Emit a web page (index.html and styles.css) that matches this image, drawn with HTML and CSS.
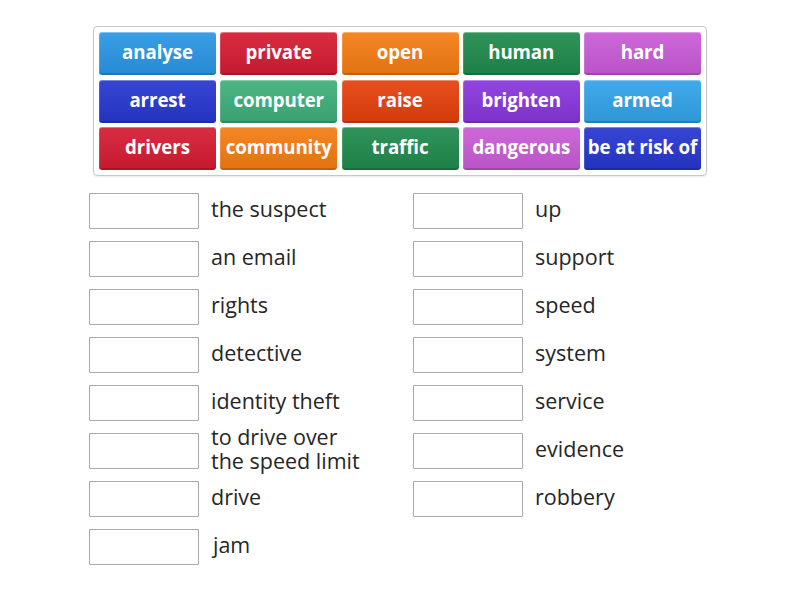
FILE: index.html
```html
<!DOCTYPE html>
<html>
<head>
<meta charset="utf-8">
<link rel="stylesheet" href="styles.css">
</head>
<body>
<div class="page">
  <div class="bank">
    <div class="tile c-sky">analyse</div>
    <div class="tile c-red">private</div>
    <div class="tile c-orange">open</div>
    <div class="tile c-green">human</div>
    <div class="tile c-orchid">hard</div>
    <div class="tile c-blue">arrest</div>
    <div class="tile c-mint">computer</div>
    <div class="tile c-vermil">raise</div>
    <div class="tile c-purple">brighten</div>
    <div class="tile c-sky2">armed</div>
    <div class="tile c-red">drivers</div>
    <div class="tile c-orange">community</div>
    <div class="tile c-green">traffic</div>
    <div class="tile c-orchid">dangerous</div>
    <div class="tile c-blue">be at risk of</div>
  </div>
  <div class="answers">
    <div class="col">
      <div class="item"><div class="slot"></div><div class="label">the suspect</div></div>
      <div class="item"><div class="slot"></div><div class="label">an email</div></div>
      <div class="item"><div class="slot"></div><div class="label">rights</div></div>
      <div class="item"><div class="slot"></div><div class="label">detective</div></div>
      <div class="item"><div class="slot"></div><div class="label">identity theft</div></div>
      <div class="item"><div class="slot"></div><div class="label">to drive over<br>the speed limit</div></div>
      <div class="item"><div class="slot"></div><div class="label">drive</div></div>
      <div class="item"><div class="slot"></div><div class="label nudge">jam</div></div>
    </div>
    <div class="col">
      <div class="item"><div class="slot"></div><div class="label">up</div></div>
      <div class="item"><div class="slot"></div><div class="label">support</div></div>
      <div class="item"><div class="slot"></div><div class="label">speed</div></div>
      <div class="item"><div class="slot"></div><div class="label">system</div></div>
      <div class="item"><div class="slot"></div><div class="label">service</div></div>
      <div class="item"><div class="slot"></div><div class="label">evidence</div></div>
      <div class="item"><div class="slot"></div><div class="label">robbery</div></div>
    </div>
  </div>
</div>
</body>
</html>
```
FILE: styles.css
```css
html, body {
  margin: 0;
  padding: 0;
  background: #ffffff;
}
body {
  font-family: "Open Sans", "Liberation Sans", sans-serif;
  color: #2b2b2b;
}
.page {
  width: 800px;
  padding-top: 26px;
  display: flex;
  flex-direction: column;
  align-items: center;
}
.bank {
  width: 602px;
  padding: 5px;
  border: 1px solid #c9c9c9;
  border-radius: 4px;
  display: grid;
  grid-template-columns: repeat(5, 1fr);
  grid-auto-rows: 43px;
  column-gap: 4.25px;
  row-gap: 4.5px;
  box-shadow: 0 1px 2px rgba(0,0,0,0.08);
}
.tile {
  border-radius: 3px;
  color: #ffffff;
  font-weight: 700;
  font-size: 18.7px;
  padding-bottom: 4px;
  display: flex;
  align-items: center;
  justify-content: center;
  white-space: nowrap;
  letter-spacing: -0.1px;
  box-shadow: inset 0 1px 0 rgba(255,255,255,0.35), inset 1px 0 0 rgba(255,255,255,0.15), inset 0 -2px 0 rgba(0,0,0,0.15);
  background-image: linear-gradient(to bottom, rgba(255,255,255,0.08), rgba(0,0,0,0.08));
}
.c-sky { background-color: #2a96e4; }
.c-sky2 { background-color: #32a2e9; }
.c-red { background-color: #d51b32; }
.c-orange { background-color: #f57c12; }
.c-green { background-color: #1f8a4c; }
.c-orchid { background-color: #c95bd7; }
.c-blue { background-color: #2637cf; }
.c-mint { background-color: #3eae7a; }
.c-vermil { background-color: #e5400c; }
.c-purple { background-color: #8936dc; }

.answers {
  margin-top: 17px;
  width: 622px;
  display: grid;
  grid-template-columns: 324px 1fr;
}
.col {
  display: flex;
  flex-direction: column;
  gap: 12px;
}
.item {
  display: flex;
  align-items: center;
  height: 36px;
  gap: 12px;
}
.slot {
  width: 108px;
  height: 34px;
  border: 1px solid #a9a9a9;
  border-radius: 1px;
  background: #fff;
  flex: none;
}
.label {
  font-size: 21.5px;
  line-height: 24px;
  padding-bottom: 5px;
  white-space: nowrap;
  color: #262626;
}
.nudge {
  margin-left: 2px;
}
```
